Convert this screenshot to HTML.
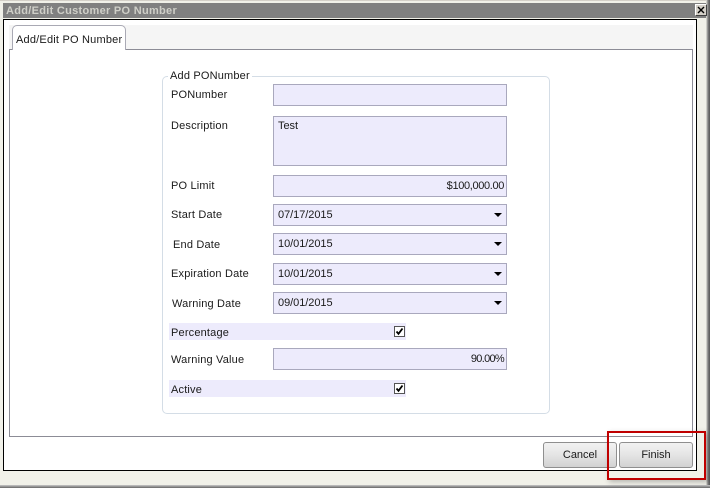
<!DOCTYPE html>
<html><head><meta charset="utf-8"><style>
html,body{margin:0;padding:0}
body{width:710px;height:488px;position:relative;overflow:hidden;background:#fff;font-family:"Liberation Sans",sans-serif;font-size:11px;color:#1a1a1a}
div{position:absolute;box-sizing:border-box}
.l{white-space:nowrap;line-height:14px;letter-spacing:.18px}
.f{left:273px;width:234px;background:#edebfc;border:1px solid #a9a8bd;line-height:21px;padding-left:4px;letter-spacing:-.05px;white-space:nowrap}
.a{position:absolute;right:4px;top:8px;width:0;height:0;border-left:4px solid transparent;border-right:4px solid transparent;border-top:4px solid #000}
.r{left:169px;width:237px;height:17px;background:#edebfc}
.c{left:394px;width:11px;height:11px;background:#fff;border:1px solid #555}
.b{top:442px;width:74px;height:26px;border:1px solid #8f8f8f;border-radius:3px;background:linear-gradient(#f2f2f2,#e6e6e6 45%,#d2d2d2);text-align:center;line-height:25px}
</style></head><body>
<div style="left:0;top:0;width:710px;height:488px;background:#f1f1e9"></div>
<div style="left:0;top:0;width:710px;height:1px;background:#d4d0c8"></div>
<div style="left:706px;top:0;width:4px;height:488px;background:linear-gradient(90deg,#e8e8e0,#808080 50%,#555)"></div>
<div style="left:0;top:485px;width:710px;height:3px;background:linear-gradient(#c8c8c8,#666)"></div>
<div style="left:3px;top:3px;width:703px;height:15px;background:#808080"></div>
<div class="l" style="left:6px;top:4px;color:#cfcfc8;font-weight:bold;font-size:11px;letter-spacing:.29px">Add/Edit Customer PO Number</div>
<div style="left:695px;top:4px;width:12px;height:12px;background:#d4d0c8;border:1px solid;border-color:#fff #404040 #404040 #fff">
<svg width="10" height="10" style="position:absolute;left:0;top:0"><path d="M2 2L8 8M8 2L2 8" stroke="#000" stroke-width="1.4"/></svg></div>
<div style="left:3px;top:19px;width:694px;height:452px;background:#fff;border:1px solid #000"></div>
<div style="left:9px;top:25px;width:684px;height:24px;background:#f5f5f5"></div>
<div style="left:9px;top:49px;width:684px;height:388px;background:#fff;border:1px solid #8c8c96"></div>
<div style="left:12px;top:25px;width:114px;height:25px;background:#fff;border:1px solid #a9a9b4;border-bottom:0;border-radius:5px 5px 0 0"></div>
<div class="l" style="left:16px;top:33px;letter-spacing:.2px">Add/Edit PO Number</div>
<div style="left:162px;top:76px;width:388px;height:338px;border:1px solid #d4dde6;border-radius:5px"></div>
<div class="l" style="left:168px;top:69px;background:#fff;padding:0 2px">Add PONumber</div>
<div class="l" style="left:171px;top:88px">PONumber</div>
<div class="f" style="top:84px;height:22px"></div>
<div class="l" style="left:171px;top:119px">Description</div>
<div class="f" style="top:116px;height:50px;line-height:19px">Test</div>
<div class="l" style="left:171px;top:179px">PO Limit</div>
<div class="f" style="top:175px;height:22px;text-align:right;padding:0 2px 0 0;letter-spacing:-.35px">$100,000.00</div>
<div class="l" style="left:171px;top:208px">Start Date</div>
<div class="f" style="top:204px;height:22px">07/17/2015<span class="a"></span></div>
<div class="l" style="left:173px;top:238px">End Date</div>
<div class="f" style="top:233px;height:22px">10/01/2015<span class="a"></span></div>
<div class="l" style="left:171px;top:267px">Expiration Date</div>
<div class="f" style="top:263px;height:22px">10/01/2015<span class="a"></span></div>
<div class="l" style="left:172px;top:297px">Warning Date</div>
<div class="f" style="top:292px;height:22px">09/01/2015<span class="a"></span></div>
<div class="r" style="top:323px"></div>
<div class="l" style="left:171px;top:326px">Percentage</div>
<div class="c" style="top:326px"><svg width="9" height="9" style="position:absolute;left:0;top:0"><path d="M1.5 4.5L3.5 6.8L7.5 1.5" fill="none" stroke="#000" stroke-width="1.8"/></svg></div>
<div class="l" style="left:171px;top:353px">Warning Value</div>
<div class="f" style="top:348px;height:22px;text-align:right;padding:0 2px 0 0;letter-spacing:-.7px">90.00%</div>
<div class="r" style="top:380px"></div>
<div class="l" style="left:171px;top:383px">Active</div>
<div class="c" style="top:383px"><svg width="9" height="9" style="position:absolute;left:0;top:0"><path d="M1.5 4.5L3.5 6.8L7.5 1.5" fill="none" stroke="#000" stroke-width="1.8"/></svg></div>
<div class="b" style="left:543px">Cancel</div>
<div class="b" style="left:619px">Finish</div>
<div style="left:607px;top:431px;width:99px;height:49px;border:2px solid #c00000;box-shadow:2px 2px 5px rgba(0,0,0,.25)"></div>
</body></html>
